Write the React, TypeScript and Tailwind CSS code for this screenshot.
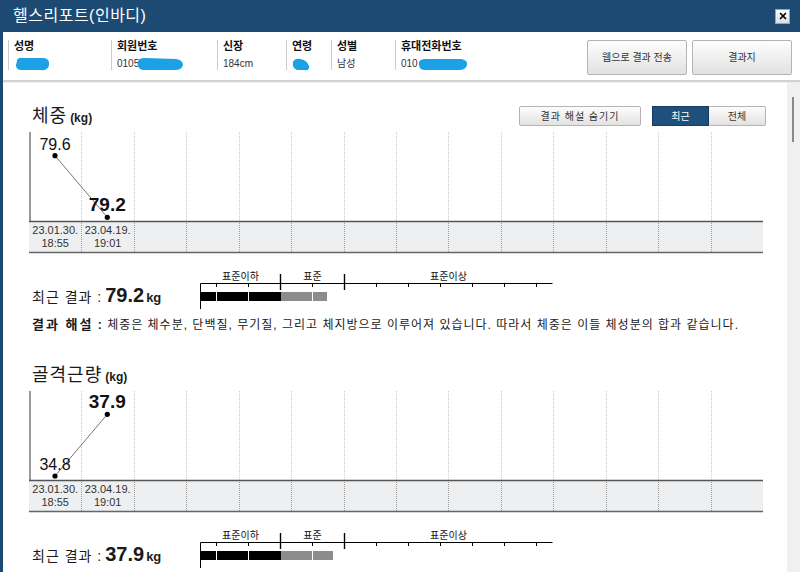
import React from "react";
import { X } from "lucide-react";

const STEP = 734 / 14;

type Pt = { x: number; y: number; label: string; bold: boolean };

function Blob({ w, h, d }: { w: number; h: number; d: string }) {
  return (
    <svg width={w} height={h} viewBox={`0 0 ${w} ${h}`} className="block shrink-0">
      <path d={d} fill="#1ca1e6" />
    </svg>
  );
}

function Chart({ pts }: { pts: Pt[] }) {
  const grid = Array.from({ length: 13 }, (_, i) => Math.round(STEP * (i + 1)) + 0.5);
  return (
    <svg width={734} height={122} className="block">
      <rect x={0} y={89} width={734} height={32} fill="#eeeff1" />
      {grid.map((x) => (
        <g key={x}>
          <line x1={x} x2={x} y1={0} y2={89} stroke="#c9c9c9" strokeDasharray="1 1" />
          <line x1={x} x2={x} y1={89} y2={121} stroke="#9b9b9b" strokeDasharray="1 1" />
        </g>
      ))}
      <line x1={1} x2={1} y1={0} y2={89} stroke="#9a9a9a" strokeWidth={2} />
      <line x1={0} x2={734} y1={89.5} y2={89.5} stroke="#555" strokeWidth={1.5} />
      <line x1={0} x2={734} y1={120.5} y2={120.5} stroke="#666" strokeWidth={1.5} />
      {[
        ["23.01.30.", "18:55"],
        ["23.04.19.", "19:01"],
      ].map(([d, t], i) => (
        <g key={d} fontFamily="'Liberation Sans', sans-serif" fontSize={11} fill="#333" textAnchor="middle">
          <text x={STEP * (i + 0.5)} y={102}>{d}</text>
          <text x={STEP * (i + 0.5)} y={115}>{t}</text>
        </g>
      ))}
      <polyline points={pts.map((p) => `${p.x},${p.y}`).join(" ")} fill="none" stroke="#777" strokeWidth={1} />
      {pts.map((p) => (
        <g key={p.label}>
          <circle cx={p.x} cy={p.y} r={2.6} fill="#000" />
          <text
            x={p.x}
            y={p.y - 6}
            textAnchor="middle"
            fontFamily="'Liberation Sans', sans-serif"
            fontSize={p.bold ? 19 : 16}
            fontWeight={p.bold ? 700 : 400}
            fill="#111"
          >
            {p.label}
          </text>
        </g>
      ))}
    </svg>
  );
}

function Scale({ grayEnd }: { grayEnd: number }) {
  const small = [21.5, 53.5, 117.5, 181.5, 213.5, 245.5, 277.5, 309.5, 341.5];
  return (
    <svg width={365} height={46} className="block shrink-0">
      <g fontFamily="'Noto Sans CJK KR', sans-serif" fontSize={10} fill="#111" textAnchor="middle">
        <text x={45.5} y={15}>표준이하</text>
        <text x={117.5} y={15}>표준</text>
        <text x={253.5} y={15}>표준이상</text>
      </g>
      <line x1={5.5} x2={357.5} y1={18.5} y2={18.5} stroke="#000" />
      <line x1={5.5} x2={5.5} y1={18.5} y2={44} stroke="#000" />
      {small.map((x) => (
        <line key={x} x1={x} x2={x} y1={18.5} y2={22} stroke="#000" />
      ))}
      <line x1={85.5} x2={85.5} y1={9} y2={25} stroke="#000" strokeWidth={1.4} />
      <line x1={149.5} x2={149.5} y1={9} y2={25} stroke="#000" strokeWidth={1.4} />
      <rect x={6} y={27} width={80} height={9} fill="#000" />
      <rect x={86} y={27} width={grayEnd - 86} height={9} fill="#8c8c8c" />
      {[21.5, 53.5, 117.5].map((x) => (
        <line key={x} x1={x} x2={x} y1={27} y2={36} stroke="#fff" />
      ))}
    </svg>
  );
}

function GrayButton({ children, className }: { children: React.ReactNode; className: string }) {
  return (
    <div
      className={
        "flex items-center justify-center border border-[#b4b4b4] bg-gradient-to-b from-[#fdfdfd] to-[#e2e2e2] text-[#333] rounded-[2px] " +
        className
      }
    >
      {children}
    </div>
  );
}

function Section({
  title,
  buttons,
  pts,
  value,
  grayEnd,
  note,
}: {
  title: string;
  buttons?: boolean;
  pts: Pt[];
  value: string;
  grayEnd: number;
  note?: string;
}) {
  return (
    <div className="flex flex-col">
      <div className="flex h-[24px] items-center justify-between">
        <div className="flex items-baseline pl-[3px] text-[#1a1a1a]">
          <span className="text-[18px] tracking-[1px]">{title}</span>
          <span className="ml-[3px] text-[12px] font-bold">(kg)</span>
        </div>
        {buttons && (
          <div className="flex items-center">
            <GrayButton className="h-[20px] w-[122px] text-[10px] tracking-[1px]">결과 해설 숨기기</GrayButton>
            <div className="ml-[11px] flex h-[20px]">
              <div className="flex w-[57px] items-center justify-center border border-[#163b5e] bg-[#1f4f7c] text-[10px] text-white">
                최근
              </div>
              <GrayButton className="w-[57px] border-l-0 text-[10px]">전체</GrayButton>
            </div>
          </div>
        )}
      </div>
      <div className="mt-[4px]">
        <Chart pts={pts} />
      </div>
      <div className="mt-[11px] flex h-[46px]">
        <div className="flex w-[166px] items-baseline pl-[3px] pt-[18px] leading-[24px] text-[#1a1a1a]">
          <span className="text-[14px] tracking-[1px]">최근 결과 :</span>
          <span className="ml-[3px] text-[20px] font-bold">{value}</span>
          <span className="ml-[2px] text-[13px] font-bold">kg</span>
        </div>
        <Scale grayEnd={grayEnd} />
      </div>
      {note && (
        <div className="mt-[6px] pl-[3px] text-[12px] leading-[16px] tracking-[1px] whitespace-nowrap text-[#1a1a1a]">
          <span className="text-[13px] font-bold tracking-[2px]">결과 해설</span>
          <span className="font-bold"> : </span>
          {note}
        </div>
      )}
    </div>
  );
}

export default function App() {
  const cols: { label: string; w: number; value: React.ReactNode }[] = [
    {
      label: "성명",
      w: 103,
      value: <Blob w={36} h={14} d="M3 4 Q3 0 10 1 L30 1 Q36 2 35 8 Q34 14 27 13 L6 13 Q0 12 3 4Z" />,
    },
    {
      label: "회원번호",
      w: 106,
      value: (
        <>
          <span>0105</span>
          <div className="-ml-[3px]">
            <Blob w={48} h={14} d="M2 5 Q2 1 9 1 L40 2 Q47 3 47 8 Q46 13 39 13 L7 13 Q1 12 2 5Z" />
          </div>
        </>
      ),
    },
    { label: "신장", w: 69, value: "184cm" },
    {
      label: "연령",
      w: 45,
      value: <Blob w={18} h={13} d="M1 4 Q3 0 8 1 Q15 2 17 8 Q18 13 12 12 L5 12 Q0 10 1 4Z" />,
    },
    { label: "성별", w: 64, value: "남성" },
    {
      label: "휴대전화번호",
      w: 140,
      value: (
        <>
          <span>010</span>
          <div className="-ml-[1px]">
            <Blob w={51} h={13} d="M2 4 Q3 1 9 1 L44 1 Q51 2 50 7 Q49 12 42 12 L7 12 Q1 11 2 4Z" />
          </div>
        </>
      ),
    },
  ];

  return (
    <div className="flex h-[572px] w-[800px] flex-col overflow-hidden bg-white font-['Liberation_Sans','Noto_Sans_CJK_KR',sans-serif]">
      <div className="flex h-[32px] shrink-0 items-center justify-between bg-[#1c4a72] pl-[13px] pr-[10px]">
        <span className="text-[16px] tracking-[0.5px] text-white">헬스리포트(인바디)</span>
        <div className="flex h-[15px] w-[15px] items-center justify-center border border-[#9aa5b0] bg-gradient-to-b from-[#ffffff] to-[#d8dde2]">
          <X size={10} strokeWidth={4} color="#000" />
        </div>
      </div>
      <div className="flex min-h-0 flex-1 flex-col border-l-[3px] border-[#1c4a72]">
        <div className="flex h-[48px] shrink-0 items-start justify-between pr-[8px] pt-[8px]">
          <div className="ml-[5px] flex h-[30px]">
            {cols.map((c) => (
              <div
                key={c.label}
                className="flex flex-col gap-[6px] border-l border-[#cdcdcd] pl-[5px]"
                style={{ width: c.w }}
              >
                <div className="text-[11px] font-bold leading-[12px] text-[#111]">{c.label}</div>
                <div className="flex h-[12px] items-center text-[10px] leading-[12px] text-[#333]">{c.value}</div>
              </div>
            ))}
          </div>
          <div className="flex gap-[5px]">
            <GrayButton className="h-[35px] w-[100px] text-[10px]">웹으로 결과 전송</GrayButton>
            <GrayButton className="h-[35px] w-[100px] text-[10px]">결과지</GrayButton>
          </div>
        </div>
        <div className="h-[3px] shrink-0 border-t-2 border-[#d2d2d2] bg-[#eeeeee]" />
        <div className="flex min-h-0 flex-1">
          <div className="flex min-w-0 flex-1 flex-col overflow-hidden pl-[26px] pr-[21px] pt-[21px]">
            <Section
              title="체중"
              buttons
              pts={[
                { x: 26, y: 23.7, label: "79.6", bold: false },
                { x: 78.3, y: 85.3, label: "79.2", bold: true },
              ]}
              value="79.2"
              grayEnd={132}
              note="체중은 체수분, 단백질, 무기질, 그리고 체지방으로 이루어져 있습니다. 따라서 체중은 이들 체성분의 합과 같습니다."
            />
            <div className="mt-[30px]">
              <Section
                title="골격근량"
                pts={[
                  { x: 26, y: 85, label: "34.8", bold: false },
                  { x: 78.3, y: 23.3, label: "37.9", bold: true },
                ]}
                value="37.9"
                grayEnd={138}
              />
            </div>
          </div>
          <div className="w-[13px] shrink-0 bg-[#f0f0f0] pt-[14px]">
            <div className="ml-[5px] h-[45px] w-[2px] bg-[#8a8a8a]" />
          </div>
        </div>
      </div>
    </div>
  );
}
